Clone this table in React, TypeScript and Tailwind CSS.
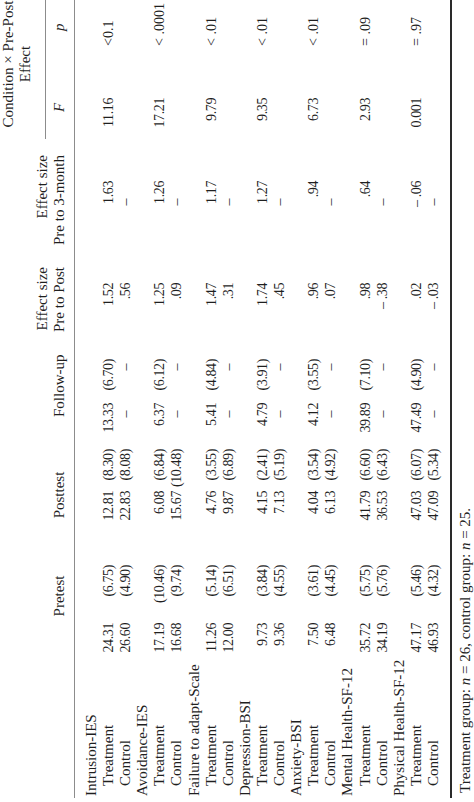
type Row = {
  name: string;
  t: string[];
  c: string[];
  F: string;
  p: string;
};

const ROWS: Row[] = [
  {
    name: "Intrusion-IES",
    t: ["24.31", "(6.75)", "12.81", "(8.30)", "13.33", "(6.70)", "1.52", "1.63"],
    c: ["26.60", "(4.90)", "22.83", "(8.08)", "–", "–", ".56", "–"],
    F: "11.16",
    p: "<0.1"
  },
  {
    name: "Avoidance-IES",
    t: ["17.19", "(10.46)", "6.08", "(6.84)", "6.37", "(6.12)", "1.25", "1.26"],
    c: ["16.68", "(9.74)", "15.67", "(10.48)", "–", "–", ".09", "–"],
    F: "17.21",
    p: "< .0001"
  },
  {
    name: "Failure to adapt-Scale",
    t: ["11.26", "(5.14)", "4.76", "(3.55)", "5.41", "(4.84)", "1.47", "1.17"],
    c: ["12.00", "(6.51)", "9.87", "(6.89)", "–", "–", ".31", "–"],
    F: "9.79",
    p: "< .01"
  },
  {
    name: "Depression-BSI",
    t: ["9.73", "(3.84)", "4.15", "(2.41)", "4.79", "(3.91)", "1.74", "1.27"],
    c: ["9.36", "(4.55)", "7.13", "(5.19)", "–", "–", ".45", "–"],
    F: "9.35",
    p: "< .01"
  },
  {
    name: "Anxiety-BSI",
    t: ["7.50", "(3.61)", "4.04", "(3.54)", "4.12", "(3.55)", ".96", ".94"],
    c: ["6.48", "(4.45)", "6.13", "(4.92)", "–", "–", ".07", "–"],
    F: "6.73",
    p: "< .01"
  },
  {
    name: "Mental Health-SF-12",
    t: ["35.72", "(5.75)", "41.79", "(6.60)", "39.89", "(7.10)", ".98", ".64"],
    c: ["34.19", "(5.76)", "36.53", "(6.43)", "–", "–", "– .38", "–"],
    F: "2.93",
    p: "= .09"
  },
  {
    name: "Physical Health-SF-12",
    t: ["47.17", "(5.46)", "47.03", "(6.07)", "47.49", "(4.90)", ".02", "– .06"],
    c: ["46.93", "(4.32)", "47.09", "(5.34)", "–", "–", "– .03", "–"],
    F: "0.001",
    p: "= .97"
  }
];

// label | pre M | pre SD | post M | post SD | fu M | fu SD | ES post | ES 3m | F | p
const COLS = "grid grid-cols-[140px_35px_58px_74px_42px_46px_44px_76px_102px_83px_130px]";

// right padding used when a cell only holds a dash
const DASH_PAD = ["", "", "", "", "pr-[8px]", "pr-[5px]", "", "pr-[18px]"];

function Values({ values }: { values: string[] }) {
  return (
    <>
      {values.map((v, i) => (
        <div
          key={i}
          className={`whitespace-nowrap text-right text-[14px] tracking-[-0.4px] ${v === "–" ? DASH_PAD[i] : ""}`}
        >
          {v}
        </div>
      ))}
    </>
  );
}

function Header() {
  return (
    <div className="-mt-1 border-b-[1.5px] border-[#8c8c8c] pb-[6px]">
      <div className={`${COLS} auto-rows-[17px] leading-[17px]`}>
        <div className="col-start-10 col-end-12 row-start-1 row-end-4 self-start">
          <div className="ml-[42px] h-[46px] w-[150px] border-b border-[#8c8c8c] text-center">
            <div className="whitespace-nowrap">Condition × Pre-Post</div>
            <div>Effect</div>
          </div>
        </div>

        <div className="col-start-8 row-start-3 -mr-[16px] whitespace-nowrap text-right">Effect size</div>
        <div className="col-start-9 row-start-3 -mr-[26px] whitespace-nowrap text-right">Effect size</div>

        <div className="col-start-2 col-end-4 row-start-4 pl-[31px] text-center">Pretest</div>
        <div className="col-start-4 col-end-6 row-start-4 pl-[24px] text-center">Posttest</div>
        <div className="col-start-6 col-end-8 row-start-4 whitespace-nowrap pl-[32px] text-center">Follow-up</div>
        <div className="col-start-8 row-start-4 -mr-[16px] whitespace-nowrap text-right">Pre to Post</div>
        <div className="col-start-9 row-start-4 -mr-[26px] whitespace-nowrap text-right">Pre to 3-month</div>
        <div className="col-start-10 row-start-4 pl-[69px] italic">F</div>
        <div className="col-start-11 row-start-4 pl-[67px] italic">p</div>
      </div>
    </div>
  );
}

function Body() {
  return (
    <div className="border-b-2 border-[#2a2a2a] pb-[8.5px] pt-[8px]">
      <div className={`${COLS} auto-rows-[17.1px] leading-[17.1px]`}>
        {ROWS.map((r) => (
          <div key={r.name} className="contents">
            <div className="col-span-11 whitespace-nowrap pl-[2px]">{r.name}</div>

            <div className="pl-[12px]">Treatment</div>
            <Values values={r.t} />
            <div className="text-right text-[14px] tracking-[-0.4px]">{r.F}</div>
            <div className="whitespace-nowrap pl-[52px] text-[14px]">{r.p}</div>

            <div className="pl-[12px]">Control</div>
            <Values values={r.c} />
            <div />
            <div />
          </div>
        ))}
      </div>
    </div>
  );
}

export default function App() {
  return (
    <div className="h-[802px] w-[474px] overflow-hidden bg-white">
      <div className="h-[474px] w-[802px] origin-top-left translate-y-[802px] -rotate-90 font-['Liberation_Serif',serif] text-[15px] text-[#1f1f1f]">
        <Header />
        <Body />
        <p className="mt-[5px] whitespace-nowrap pl-[5px] leading-[17px]">
          Treatment group: <i>n</i> = 26, control group: <i>n</i> = 25.
        </p>
      </div>
    </div>
  );
}
